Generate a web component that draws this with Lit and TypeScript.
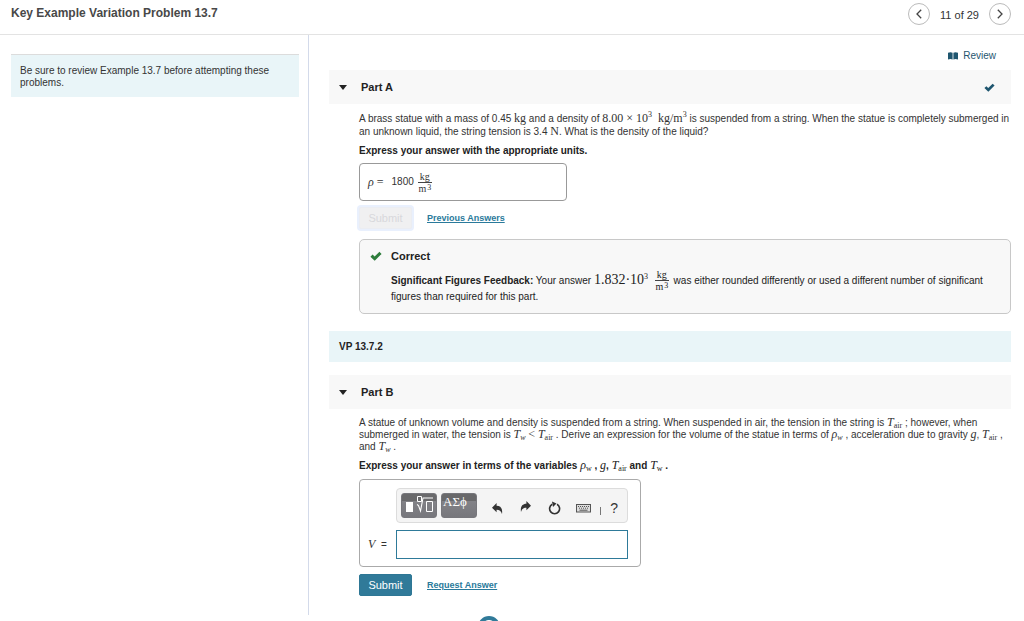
import { LitElement, html, css, svg } from "lit";
import { customElement } from "lit/decorators.js";

const check = svg`<path d="M.5 6.500 3 4l2.400 2.400L11 .8l2.500 2.500L5.500 11.300Z" fill="currentColor"/>`;
const tAir = html`<span class="m"><i>T</i><sub>air</sub></span>`;
const tW = html`<span class="m"><i>T</i><sub><i>w</i></sub></span>`;
const tWr = html`<span class="m"><i>T</i><sub>w</sub></span>`;
const kgm3 = html`<span class="frac"><span class="num">kg</span><span class="den">m<sup>3</sup></span></span>`;

@customElement("app-root")
export class AppRoot extends LitElement {
  static styles = css`
    :host {
      display: block;
      height: 100vh;
      overflow: hidden;
      background: #fff;
      color: #333;
      font: 10px/12px "Liberation Sans", Arial, sans-serif;
    }
    * { box-sizing: border-box; }
    h1, h2, p { margin: 0; }
    button { font: inherit; cursor: pointer; padding: 0; }
    svg { display: block; }
    a { color: #2a7a9b; }
    .top {
      display: flex;
      justify-content: space-between;
      height: 35px;
      padding: 3px 13px 0 11px;
      border-bottom: 1px solid #e3e3e3;
    }
    h1 { font-size: 12px; line-height: 20px; color: #484848; }
    .pager { display: flex; gap: 10px; font-size: 11px; line-height: 24px; }
    .round {
      display: grid;
      place-items: center;
      width: 22px;
      height: 22px;
      border: 1px solid #bbb;
      border-radius: 50%;
      background: #fff;
      color: #444;
    }
    .cols { display: grid; grid-template-columns: 309px minmax(0, 1fr); }
    .side { padding: 19px 9px 0 11px; border-right: 1px solid #d3daea; }
    .note {
      padding: 10px 9px 8px;
      border-top: 1px solid #dcdcdc;
      background: #e9f5f8;
    }
    .main { padding: 14px 13px 19px 20px; }
    .review {
      display: flex;
      justify-content: flex-end;
      padding-right: 15px;
      margin-bottom: 7px;
    }
    .review a {
      display: flex;
      align-items: center;
      gap: 5px;
      line-height: 14px;
      color: #1f566f;
      text-decoration: none;
    }
    .bar {
      display: flex;
      align-items: center;
      height: 34px;
      padding: 0 16px 0 10px;
      background: #f8f8f8;
    }
    .bar h2 { flex: 1; font-size: 11px; line-height: 14px; color: #222; }
    .fold { width: 22px; height: 14px; border: 0; background: none; color: #222; display: flex; align-items: center; }
    .done { color: #1f566f; }
    .body { padding: 8px 0 0 30px; }
    .tall { line-height: 13px; }
    .lead { margin-top: 7px; font-weight: bold; color: #222; }
    .m { font-family: "Liberation Serif", "Times New Roman", serif; font-size: 12px; line-height: 0; white-space: nowrap; font-weight: normal; }
    .m sup, .m sub { font-size: 8px; line-height: 0; }
    .m sup { vertical-align: 5px; }
    .m sub { vertical-align: -2px; }
    .big { font-size: 14px; }
    .frac {
      display: inline-flex;
      flex-direction: column;
      align-items: center;
      vertical-align: middle;
      font: 10px/11px "Liberation Serif", "Times New Roman", serif;
    }
    .num { padding: 0 2px; border-bottom: 1px solid #444; }
    .frac sup { font-size: 8px; line-height: 0; margin-left: 1px; vertical-align: 2px; }
    .answer {
      display: flex;
      align-items: center;
      width: 208px;
      height: 38px;
      margin-top: 6px;
      padding: 0 8px;
      border: 1px solid #999;
      border-radius: 4px;
    }
    .answer .m { margin-right: 8px; }
    .answer .frac { margin-left: 4px; }
    .actions { display: flex; align-items: center; gap: 15px; }
    .actions a { font-weight: bold; font-size: 9px; text-underline-offset: 1px; }
    .submit {
      width: 53px;
      height: 22px;
      border: 1px solid #2e7795;
      border-radius: 2px;
      background: #307a99;
      color: #fff;
      font-size: 11px;
    }
    .submit:disabled {
      border-color: #ebedf2;
      background: #f0f0f1;
      color: #d8d8dc;
      box-shadow: 0 0 0 2px #e9f0fd;
    }
    .first { margin-top: 6px; }
    .feedback {
      display: grid;
      grid-template-columns: 21px minmax(0, 1fr);
      margin-top: 10px;
      padding: 9px 24px 8px 10px;
      border: 1px solid #c8c8c8;
      border-radius: 5px;
      background: #f8f8f8;
      color: #222;
    }
    .ok { color: #2e7d3c; padding-top: 2px; }
    .feedback h2 { font-size: 11px; line-height: 15px; }
    .feedback p { line-height: 16px; margin-top: 9px; }
    .feedback .frac { margin: -7px 2px -5px 4px; }
    .vp {
      margin: 17px 0 13px;
      padding: 0 10px;
      background: #e9f5f8;
      font-weight: bold;
      line-height: 31px;
      color: #222;
    }
    .editor {
      display: grid;
      grid-template-columns: 28px 232px;
      align-items: center;
      row-gap: 7px;
      width: 282px;
      margin-top: 7px;
      padding: 8px 12px 7px 8px;
      border: 1px solid #aaa;
      border-radius: 4px;
    }
    .tools {
      grid-column: 2;
      display: flex;
      align-items: center;
      height: 35px;
      padding: 0 9px 0 4px;
      border: 1px solid #dcdcdc;
      border-radius: 4px;
      background: #f4f4f4;
    }
    .key {
      width: 36px;
      height: 25px;
      margin-right: 4px;
      border: 1px solid #77777c;
      border-radius: 3px;
      background: linear-gradient(#69696b 0 30%, #828287 32%, #77777c);
      color: #fff;
    }
    .greek { font: 13px/15px "Liberation Serif", serif; display: flex; padding-left: 1px; }
    .tool { border: 0; background: none; color: #333; }
    .icons { flex: 1; display: flex; align-items: center; justify-content: space-between; padding: 5px 0 0 11px; }
    .edit, .aids { display: flex; align-items: center; }
    .edit { gap: 17px; }
    .aids { gap: 9px; }
    .q { font-size: 14px; line-height: 14px; }
    .stick { width: 1px; height: 8px; margin-top: 5px; background: #777; }
    .field { width: 100%; height: 29px; border: 1px solid #2e7a99; border-radius: 0; background: #fff; padding: 0 6px; font: 12px "Liberation Sans", sans-serif; outline: 0; }
    .second { margin-top: 7px; }
    .foot { display: flex; justify-content: center; padding: 1px 46px 0 0; }
  `;

  render() {
    return html`
      <header class="top">
        <h1>Key Example Variation Problem 13.7</h1>
        <nav class="pager">
          <button class="round" aria-label="Previous">
            <svg width="8" height="10" viewBox="0 0 8 10" fill="none" stroke="currentColor" stroke-width="1.3"><path d="M6.200.8 2 5l4.200 4.200"/></svg>
          </button>
          <span>11 of 29</span>
          <button class="round" aria-label="Next">
            <svg width="8" height="10" viewBox="0 0 8 10" fill="none" stroke="currentColor" stroke-width="1.3"><path d="M1.800.8 6 5 1.800 9.200"/></svg>
          </button>
        </nav>
      </header>
      <div class="cols">
        <aside class="side">
          <p class="note">Be sure to review Example 13.7 before attempting these problems.</p>
        </aside>
        <main class="main">
          <div class="review">
            <a href="#review">
              <svg width="10" height="8" viewBox="0 0 10 8"><path d="M0 .8Q2.500-.4 4.600.8V7.600Q2.500 6.600 0 7.600ZM5.400.8Q7.500-.4 10 .8V7.600Q7.500 6.600 5.400 7.600Z" fill="currentColor"/></svg>
              Review
            </a>
          </div>
          <section>
            <div class="bar">
              <button class="fold" aria-label="Collapse Part A"><svg width="8" height="5" viewBox="0 0 8 5"><path d="M0 0h8L4 5Z" fill="currentColor"/></svg></button>
              <h2>Part A</h2>
              <svg class="done" width="11" height="9" viewBox="0 0 14 11.5">${check}</svg>
            </div>
            <div class="body">
              <p class="tall">A brass statue with a mass of 0.45 <span class="m">kg</span> and a density of <span class="m">8.00 × 10<sup>3</sup>&nbsp; kg/m<sup>3</sup></span> is suspended from a string. When the statue is completely submerged in an unknown liquid, the string tension is 3.4 <span class="m">N</span>. What is the density of the liquid?</p>
              <p class="lead">Express your answer with the appropriate units.</p>
              <div class="answer"><span class="m"><i>ρ</i> =</span>1800${kgm3}</div>
              <div class="actions first">
                <button class="submit" disabled>Submit</button>
                <a href="#previous">Previous Answers</a>
              </div>
              <div class="feedback">
                <svg class="ok" width="12" height="12" viewBox="0 0 14 11.5">${check}</svg>
                <div>
                  <h2>Correct</h2>
                  <p><b>Significant Figures Feedback:</b> Your answer <span class="m big">1.832·10<sup>3</sup></span> ${kgm3} was either rounded differently or used a different number of significant figures than required for this part.</p>
                </div>
              </div>
            </div>
          </section>
          <p class="vp">VP 13.7.2</p>
          <section>
            <div class="bar">
              <button class="fold" aria-label="Collapse Part B"><svg width="8" height="5" viewBox="0 0 8 5"><path d="M0 0h8L4 5Z" fill="currentColor"/></svg></button>
              <h2>Part B</h2>
            </div>
            <div class="body">
              <p>A statue of unknown volume and density is suspended from a string. When suspended in air, the tension in the string is ${tAir}&nbsp;; however, when submerged in water, the tension is ${tW} <span class="m">&lt;</span> ${tAir}&nbsp;. Derive an expression for the volume of the statue in terms of <span class="m"><i>ρ</i><sub><i>w</i></sub></span>&nbsp;, acceleration due to gravity <span class="m"><i>g</i></span>, ${tAir}&nbsp;, and ${tW}&nbsp;.</p>
              <p class="lead">Express your answer in terms of the variables <span class="m"><i>ρ</i><sub>w</sub></span>&nbsp;, <span class="m"><i>g</i></span>, ${tAir} and ${tWr}&nbsp;.</p>
              <div class="editor">
                <div class="tools">
                  <button class="key" aria-label="Templates">
                    <svg width="34" height="23" viewBox="0 0 34 23" fill="none" stroke="#fff"><path d="M4 8h7v10H4Z" fill="#fff" stroke="none"/><path d="M15 10.500l1.500 1 2 5.500 2.500-13h10" stroke-width="1.1"/><path d="M15.500 2.500h4v5h-4ZM24.500 7.500h6v10h-6Z" stroke-width="1"/></svg>
                  </button>
                  <button class="key greek">ΑΣϕ</button>
                  <div class="icons">
                    <div class="edit">
                      <button class="tool" aria-label="Undo"><svg width="11" height="11" viewBox="0 0 11 11"><path d="M4.600 0v2.700C8.800 2.800 10.800 5.500 10 11 9 7.800 7.500 6.700 4.600 6.700V9.300L0 4.700Z" fill="currentColor"/></svg></button>
                      <button class="tool" aria-label="Redo"><svg width="11" height="14" viewBox="0 0 11 14"><path d="M6.400 0v2.700C2.200 2.800.2 5.500 1 11 2 7.800 3.500 6.700 6.400 6.700V9.300L11 4.700Z" fill="currentColor"/></svg></button>
                      <button class="tool" aria-label="Reset"><svg width="13" height="14" viewBox="0 0 13 14"><path d="M4.200 3.300A5 5 0 1 0 9 3.300" fill="none" stroke="currentColor" stroke-width="1.600"/><path d="M4 .5 8.500 2.600 5 6Z" fill="currentColor"/></svg></button>
                    </div>
                    <div class="aids">
                      <button class="tool" aria-label="Keyboard"><svg width="15" height="9" viewBox="0 0 15 9"><rect x=".5" y=".5" width="14" height="7.500" fill="#ddd" stroke="#555"/><path d="M2 2.500h11M3 4.200h10" stroke="#555" stroke-dasharray="1 1"/><path d="M3.500 6.200h8" stroke="#555"/></svg></button>
                      <span class="stick"></span>
                      <button class="tool q" aria-label="Help">?</button>
                    </div>
                  </div>
                </div>
                <label for="v"><span class="m"><i>V</i></span>&nbsp; =</label>
                <input class="field" id="v" type="text" />
              </div>
              <div class="actions second">
                <button class="submit">Submit</button>
                <a href="#request">Request Answer</a>
              </div>
            </div>
          </section>
        </main>
      </div>
      <footer class="foot">
        <svg width="22" height="22" viewBox="0 0 22 22"><circle cx="11" cy="11" r="9" fill="none" stroke="#307a99" stroke-width="4"/></svg>
      </footer>
    `;
  }
}
